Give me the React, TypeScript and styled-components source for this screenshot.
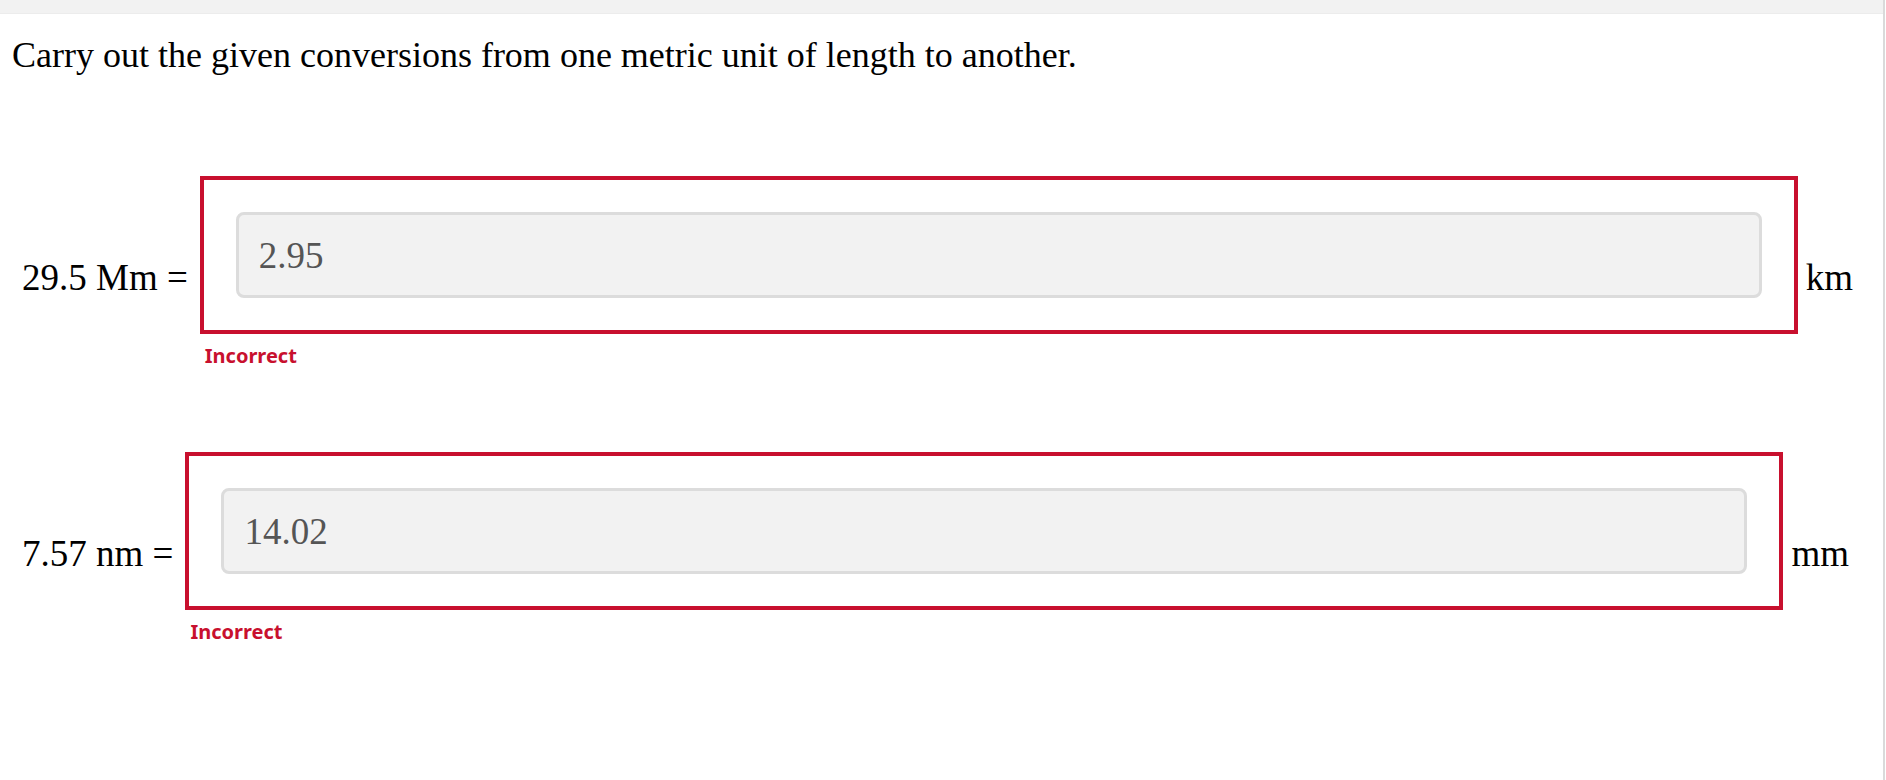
import React from 'react';
import styled, { createGlobalStyle } from 'styled-components';

const GlobalStyle = createGlobalStyle`
    html, body {
        margin: 0;
        padding: 0;
        background: #ffffff;
    }
`;

const Page = styled.div`
    width: 1883px;
    min-height: 780px;
    border-right: 2px solid #dadada;
    font-family: 'Liberation Serif', 'Times New Roman', serif;
    color: #000;
`;

const TopBar = styled.div`
    height: 13px;
    background-color: #f2f2f2;
    border-bottom: 1px solid #ececec;
`;

const Content = styled.div`
    padding: 23px 0 0 12px;
`;

const Title = styled.p`
    margin: 0 0 102px 0;
    font-size: 36px;
    line-height: 37px;
`;

const Row = styled.div`
    display: flex;
    align-items: flex-start;
    margin-bottom: 86px;
`;

const Label = styled.span`
    margin: 83px 12px 0 10px;
    font-size: 37px;
    line-height: 37px;
    white-space: nowrap;
`;

const Unit = styled.span`
    margin: 83px 0 0 8px;
    font-size: 37px;
    line-height: 37px;
`;

const FieldColumn = styled.div`
    display: flex;
    flex-direction: column;
`;

const AnswerBox = styled.div`
    width: 1598px;
    box-sizing: border-box;
    padding: 32px;
    border: 4px solid #c8102e;
`;

const Input = styled.div`
    height: 86px;
    box-sizing: border-box;
    display: flex;
    align-items: center;
    padding-left: 20px;
    background-color: #f2f2f2;
    border: 3px solid #dcdcdc;
    border-radius: 8px;
    font-size: 37px;
    color: #555555;
`;

const Feedback = styled.span`
    margin: 12px 0 0 5px;
    font-family: 'Noto Sans', 'Open Sans', sans-serif;
    font-size: 20px;
    line-height: 20px;
    font-weight: 700;
    color: #c8102e;
`;

type Conversion = {
    given: string;
    answer: string;
    unit: string;
};

const conversions: Conversion[] = [
    { given: '29.5 Mm =', answer: '2.95', unit: 'km' },
    { given: '7.57 nm =', answer: '14.02', unit: 'mm' },
];

function App() {
    return (
        <Page>
            <GlobalStyle />
            <TopBar />
            <Content>
                <Title>Carry out the given conversions from one metric unit of length to another.</Title>
                {conversions.map((c) => (
                    <Row key={c.given}>
                        <Label>{c.given}</Label>
                        <FieldColumn>
                            <AnswerBox>
                                <Input>{c.answer}</Input>
                            </AnswerBox>
                            <Feedback>Incorrect</Feedback>
                        </FieldColumn>
                        <Unit>{c.unit}</Unit>
                    </Row>
                ))}
            </Content>
        </Page>
    );
}

export default App;
